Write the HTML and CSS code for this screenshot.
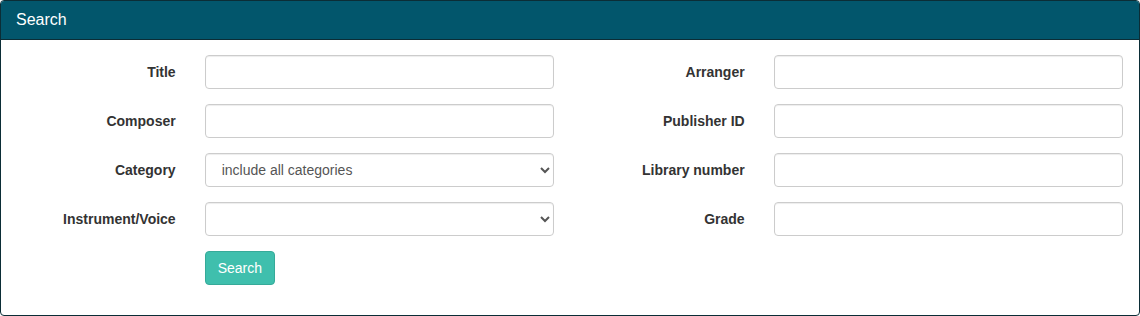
FILE: index.html
```html
<!DOCTYPE html>
<html lang="en">
<head>
  <meta charset="UTF-8" />
  <title>Search</title>
  <link rel="stylesheet" href="styles.css">
</head>
<body>
  <div class="panel">
    <div class="panel-heading">Search</div>
    <form class="panel-body">
      <div class="col">
        <label for="title">Title</label>
        <div class="field"><input type="text" id="title" /></div>

        <label for="composer">Composer</label>
        <div class="field"><input type="text" id="composer" /></div>

        <label for="category">Category</label>
        <div class="field">
          <select id="category">
            <option>include all categories</option>
          </select>
        </div>

        <label for="instrument">Instrument/Voice</label>
        <div class="field">
          <select id="instrument">
            <option></option>
          </select>
        </div>

        <span></span>
        <div class="field"><button type="button" class="btn">Search</button></div>
      </div>

      <div class="col">
        <label for="arranger">Arranger</label>
        <div class="field"><input type="text" id="arranger" /></div>

        <label for="publisher">Publisher ID</label>
        <div class="field"><input type="text" id="publisher" /></div>

        <label for="library">Library number</label>
        <div class="field"><input type="text" id="library" /></div>

        <label for="grade">Grade</label>
        <div class="field"><input type="text" id="grade" /></div>
      </div>
    </form>
  </div>
</body>
</html>
```

FILE: styles.css
```css
* {
  box-sizing: border-box;
}
body {
  margin: 0;
  font-family: "Liberation Sans", Arial, sans-serif;
  font-size: 14px;
  color: #333333;
  background: #ffffff;
}
.panel {
  height: 316px;
  border: 1px solid #0b2d36;
  border-radius: 4px;
  overflow: hidden;
}
.panel-heading {
  background: #02566c;
  color: #ffffff;
  font-size: 16px;
  line-height: 18px;
  padding: 10px 15px 10px 15px;
  border-bottom: 1px solid #0b2d36;
}
.panel-body {
  display: grid;
  grid-template-columns: 1fr 1fr;
  padding: 15px 0;
  margin: 0;
}
.col {
  display: grid;
  grid-template-columns: 1fr 2fr;
  grid-auto-rows: 34px;
  row-gap: 15px;
  align-items: center;
}
.col label {
  text-align: right;
  font-weight: bold;
  padding: 0 15px;
}
.field {
  padding: 0 16px 0 14px;
}
input, select {
  display: block;
  width: 100%;
  height: 34px;
  padding: 6px 12px;
  font-family: inherit;
  font-size: 14px;
  color: #555555;
  background: #ffffff;
  border: 1px solid #cccccc;
  border-radius: 4px;
  box-shadow: inset 0 1px 1px rgba(0,0,0,0.075);
}
.btn {
  height: 34px;
  padding: 6px 12px;
  font-family: inherit;
  font-size: 14px;
  color: #ffffff;
  background: #3fbfad;
  border: 1px solid #36aa99;
  border-radius: 4px;
}
```
